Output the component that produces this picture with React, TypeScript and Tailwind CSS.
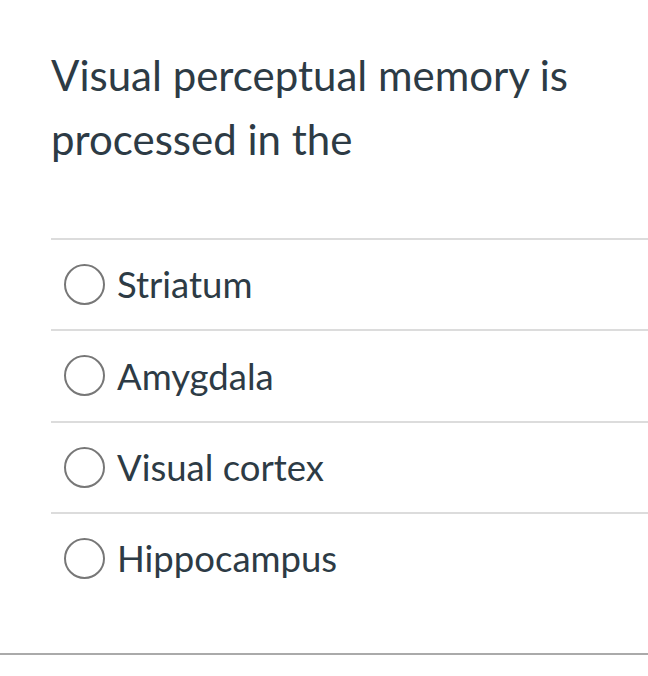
const OPTIONS = ['Striatum', 'Amygdala', 'Visual cortex', 'Hippocampus']

function OptionRow({ label }: { label: string }) {
  return (
    <div className="h-[91.33px] border-t-2 border-[#dcdcdc] flex items-center pl-[13px]">
      <span className="w-[41px] h-[41px] rounded-full border-[2.5px] border-[#777777] bg-white flex-shrink-0" />
      <span className="ml-[12px] text-[36.5px] text-[#2d3b45] leading-none">{label}</span>
    </div>
  )
}

export default function App() {
  return (
    <div className="w-[648px] h-[676px] bg-white overflow-hidden font-['Lato',sans-serif]">
      <div className="pl-[51px] pt-[43px]">
        <h1 className="text-[42px] leading-[64px] text-[#2d3b45] pr-[40px]">
          Visual perceptual memory is processed in the
        </h1>
        <div className="mt-[67px]">
          {OPTIONS.map(o => (
            <OptionRow key={o} label={o} />
          ))}
        </div>
      </div>
      <div className="mt-[50px] border-t-2 border-[#aaaaaa]" />
    </div>
  )
}
